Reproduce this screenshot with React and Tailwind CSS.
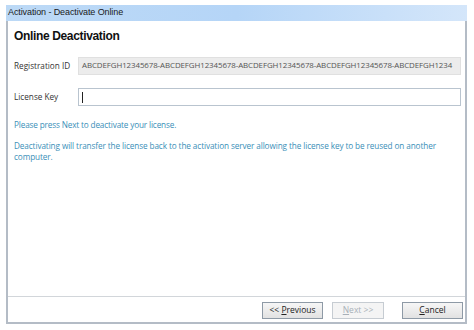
export default function App() {
  const font = { fontFamily: '"Open Sans", "Liberation Sans", sans-serif' };
  return (
    <div className="w-[474px] h-[330px] bg-white relative overflow-hidden" style={font}>
      <div className="absolute left-[6px] top-[5px] w-[461px] h-[319px] flex flex-col">
        <div className="h-[16px] flex items-center pl-[2px] bg-gradient-to-r from-[#bcd9f6] via-[#b5d5f7] to-[#d4e6fa] text-[9px] text-[#1a1a1a] tracking-[-0.1px]" style={{ fontFamily: '"Liberation Sans", Arial, sans-serif' }}>
          Activation - Deactivate Online
        </div>
        <div className="flex-1 flex flex-col border-l-2 border-r-2 border-b-2 border-[#b4bcc6] bg-white">
          <div className="flex-1 flex flex-col pl-[6px] pr-[4px]">
            <div className="h-[27px] flex items-center text-[12px] font-bold text-[#111] tracking-[-0.35px] mt-[1px]" style={{ fontFamily: '"Liberation Sans", Arial, sans-serif' }}>
              Online Deactivation
            </div>
            <div className="flex items-center mt-[8px] h-[18px]">
              <div className="w-[64px] text-[8.2px] text-[#333]">Registration ID</div>
              <div className="flex-1 h-[18px] bg-[#ececec] border border-[#e0e0e0] flex items-center pl-[3px] overflow-hidden whitespace-nowrap text-[7.9px] tracking-[-0.08px] text-[#555]">
                ABCDEFGH12345678-ABCDEFGH12345678-ABCDEFGH12345678-ABCDEFGH12345678-ABCDEFGH1234
              </div>
            </div>
            <div className="flex items-center mt-[13px] h-[18px]">
              <div className="w-[64px] text-[8.2px] text-[#333]">License Key</div>
              <div className="flex-1 h-[18px] bg-white border border-[#b9c4cf] flex items-center pl-[3px]">
                <div className="w-px h-[11px] bg-[#222]" />
              </div>
            </div>
            <div className="mt-[13px] text-[8.2px] tracking-[-0.15px] text-[#3a8fb8] leading-[12px]">
              Please press Next to deactivate your license.
            </div>
            <div className="mt-[9px] text-[8.2px] tracking-[-0.1px] text-[#3a8fb8] leading-[11px] pr-[6px]">
              Deactivating will transfer the license back to the activation server allowing the license key to be reused on another computer.
            </div>
          </div>
          <div className="h-[26px] border-t border-[#d2d6da] flex items-center justify-end pr-[2px] gap-[9px] text-[8.5px] pt-[2px]">
            <button className="w-[61px] h-[17px] border border-[#8e9aa6] bg-gradient-to-b from-[#f6f6f6] to-[#e2e2e2] text-[#222] flex items-center justify-center">
              &lt;&lt;&nbsp;<span className="underline">P</span>revious
            </button>
            <button className="w-[52px] h-[17px] border border-[#c6ccd2] bg-[#f4f4f4] text-[#a8b0b8] flex items-center justify-center">
              <span className="underline">N</span>ext &gt;&gt;
            </button>
            <button className="w-[61px] h-[17px] border border-[#8e9aa6] bg-gradient-to-b from-[#f6f6f6] to-[#e2e2e2] text-[#222] flex items-center justify-center ml-[9px]">
              <span className="underline">C</span>ancel
            </button>
          </div>
        </div>
      </div>
    </div>
  );
}
